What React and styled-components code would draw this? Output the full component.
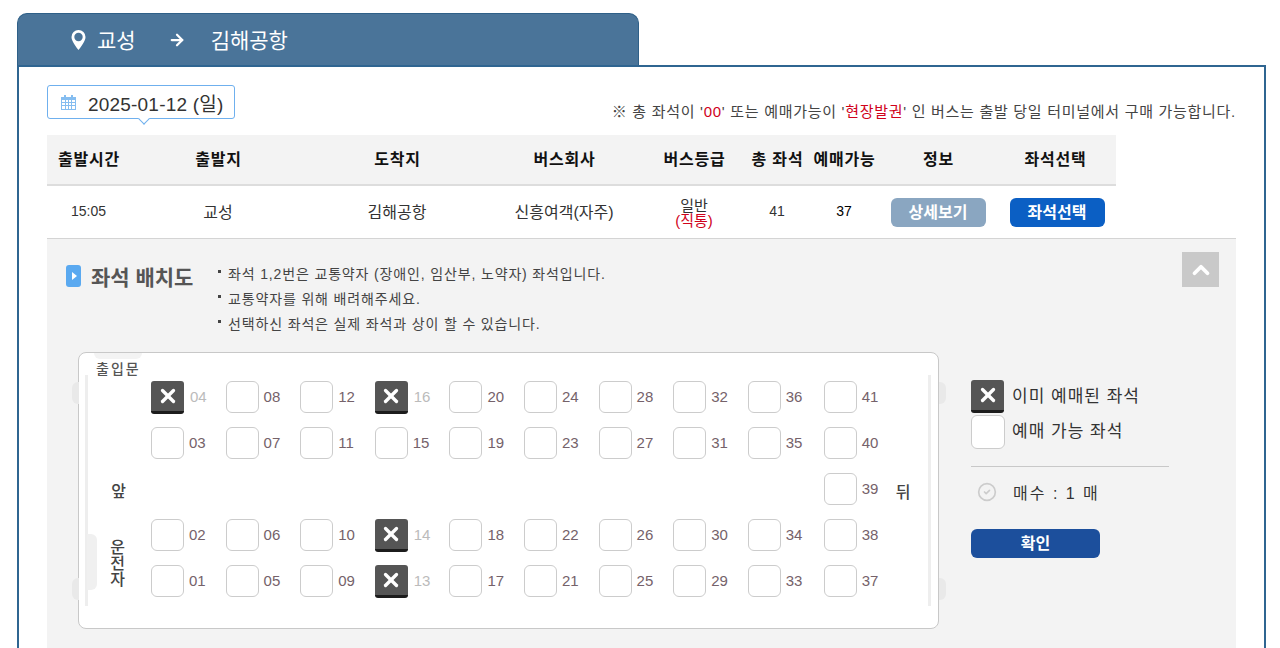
import styled, { createGlobalStyle } from "styled-components";
import { ArrowRight, ChevronUp, CircleCheck, X } from "lucide-react";

const GlobalStyle = createGlobalStyle`
  html, body {
    margin: 0;
    height: 648px;
    overflow: hidden;
    background: #fff;
  }
  body {
    font-family: "Liberation Sans", "Noto Sans CJK KR", sans-serif;
    color: #222;
  }
`;

const Page = styled.div`
  padding: 13px 14px 0 17px;
`;

const RouteTab = styled.div`
  width: 622px;
  height: 52px;
  box-sizing: border-box;
  display: flex;
  align-items: center;
  padding-left: 53px;
  background: #4a7499;
  border: 1px solid #2f6088;
  border-bottom: 0;
  border-radius: 10px 10px 0 0;
  color: #fff;
  font-size: 21px;
`;

const Place = styled.span`
  margin-bottom: 2px;
  margin-left: ${(p) => p.$left || 0}px;
`;

const Arrow = styled.span`
  display: flex;
  margin: 0 25px 0 32px;
`;

const Box = styled.div`
  box-sizing: border-box;
  width: 1249px;
  height: 640px;
  padding: 18px 28px 0 28px;
  border: 2px solid #2f6591;
  border-bottom: 0;
`;

const TopRow = styled.div`
  height: 50px;
  display: flex;
  justify-content: space-between;
`;

const DateBadge = styled.div`
  position: relative;
  box-sizing: border-box;
  width: 188px;
  height: 34px;
  display: flex;
  align-items: center;
  gap: 12px;
  padding-left: 13px;
  background: #fff;
  border: 1px solid #6fb0ee;
  border-radius: 3px;
  font-size: 19px;
  letter-spacing: 0.2px;
  color: #333;
  &::after {
    content: "";
    position: absolute;
    left: 92px;
    bottom: -5px;
    width: 7px;
    height: 7px;
    background: #fff;
    border-right: 1px solid #6fb0ee;
    border-bottom: 1px solid #6fb0ee;
    transform: rotate(45deg);
  }
`;

const Notice = styled.div`
  align-self: flex-start;
  margin-top: 17px;
  font-size: 15px;
  line-height: 20px;
  letter-spacing: 0.71px;
  color: #444;
  white-space: nowrap;
`;

const Red = styled.span`
  color: #d0021b;
`;

const Columns = styled.div`
  width: 1069px;
  display: grid;
  grid-template-columns: 83px 176px 182px 152px 108px 58px 76px 112px 122px;
  align-items: center;
  text-align: center;
`;

const HeadRow = styled(Columns)`
  box-sizing: content-box;
  height: 46px;
  padding-bottom: 3px;
  background: #f3f3f3;
  border-bottom: 2px solid #ddd;
  font-size: 16px;
  letter-spacing: 0.8px;
  text-indent: 1px;
  font-weight: 700;
  color: #111;
  white-space: nowrap;
`;

const BodyRow = styled(Columns)`
  height: 52px;
  font-size: 16px;
  color: #333;
`;

const Plain = styled.div`
  padding-bottom: 2px;
`;

const Time = styled(Plain)`
  font-size: 14px;
`;

const Grade = styled.div`
  line-height: 15px;
  padding-top: 1px;
  font-size: 15px;
`;

const Count = styled.div`
  font-size: 14px;
  padding-bottom: 2px;
  color: ${(p) => (p.$strong ? "#000" : "#333")};
`;

const RowButton = styled.div`
  justify-self: center;
  width: 95px;
  height: 29px;
  margin-left: ${(p) => p.$shift || 0}px;
  line-height: 29px;
  border-radius: 6px;
  background: ${(p) => p.$bg};
  color: #fff;
  font-size: 16px;
  font-weight: 700;
`;

const Panel = styled.div`
  position: relative;
  height: 420px;
  box-sizing: border-box;
  padding: 19px 0 0 19px;
  background: #f3f3f3;
  border-top: 1px solid #d4d4d4;
`;

const CollapseButton = styled.div`
  position: absolute;
  top: 13px;
  right: 17px;
  width: 37px;
  height: 35px;
  display: flex;
  align-items: center;
  justify-content: center;
  background: #c9c9c9;
`;

const PanelHead = styled.div`
  display: flex;
  height: 94px;
`;

const TitleMark = styled.div`
  width: 15px;
  height: 22px;
  margin: 7px 10px 0 0;
  display: flex;
  align-items: center;
  justify-content: center;
  background: #5aa9f0;
  border-radius: 3px;
  &::before {
    content: "";
    border-left: 5px solid #fff;
    border-top: 4px solid transparent;
    border-bottom: 4px solid transparent;
    margin-left: 1px;
  }
`;

const Title = styled.div`
  width: 127px;
  margin-top: 5px;
  font-size: 21px;
  line-height: 29px;
  font-weight: 700;
  color: #555;
`;

const Notes = styled.ul`
  list-style: none;
  margin: 4px 0 0;
  padding: 0;
  font-size: 14px;
  line-height: 25px;
  letter-spacing: 0.85px;
  color: #444;
`;

const Note = styled.li`
  position: relative;
  padding-left: 10px;
  &::before {
    content: "";
    position: absolute;
    left: 0;
    top: 8px;
    width: 3px;
    height: 3px;
    background: #444;
  }
`;

const PanelBody = styled.div`
  display: flex;
  gap: 32px;
  padding-left: 12px;
`;

const Card = styled.div`
  position: relative;
  box-sizing: border-box;
  width: 861px;
  height: 277px;
  padding-top: 28px;
  background: #fff;
  border: 1px solid #c8c8c8;
  border-radius: 8px;
`;

const Blob = styled.div`
  position: absolute;
  width: 7px;
  height: 22px;
  background: #e9e9e9;
  top: ${(p) => p.$top}px;
  ${(p) =>
    p.$side === "left"
      ? "left: -7px; border-radius: 6px 0 0 6px;"
      : "right: -8px; border-radius: 0 6px 6px 0;"}
`;

const Door = styled.div`
  position: absolute;
  top: 0;
  left: 15px;
  width: 48px;
  height: 6px;
  background: #f3f3f3;
  border-radius: 0 0 8px 8px;
`;

const DoorLabel = styled.div`
  position: absolute;
  top: 6px;
  left: 17px;
  font-size: 14px;
  line-height: 20px;
  font-weight: 500;
  color: #555;
  letter-spacing: 2px;
`;

const Rail = styled.div`
  position: absolute;
  top: 22px;
  ${(p) => (p.$side === "left" ? "left: 6px;" : "right: 7px;")}
  width: 3px;
  height: 231px;
  background: #eee;
`;

const DriverSeat = styled.div`
  position: absolute;
  top: 181px;
  left: 8px;
  width: 10px;
  height: 56px;
  background: #f0f0f0;
  border-radius: 0 6px 6px 0;
`;

const SeatGrid = styled.div`
  display: grid;
  grid-template-columns: 72px repeat(8, 74.6px) 76px 71px 1fr;
  grid-auto-rows: 46px;
`;

const SideLabel = styled.div`
  grid-column: ${(p) => p.$col};
  grid-row: ${(p) => p.$row};
  padding: ${(p) => p.$pad};
  font-size: 16px;
  line-height: 16px;
  color: #444;
  font-weight: 500;
  text-align: ${(p) => p.$align || "center"};
`;

const SeatCell = styled.div`
  grid-column: ${(p) => p.$col};
  grid-row: ${(p) => p.$row};
  display: flex;
  align-items: flex-start;
  gap: ${(p) => (p.$taken ? 6 : 5)}px;
  color: ${(p) => (p.$taken ? "#bbb" : "#75626a")};
  font-size: 15px;
  line-height: 32px;
`;

const FreeSeat = styled.div`
  box-sizing: border-box;
  flex: none;
  width: ${(p) => p.$size || 33}px;
  height: ${(p) => p.$size || 32}px;
  background: #fff;
  border: 1.5px solid #ccc;
  border-radius: 6px;
`;

const TakenSeat = styled.div`
  box-sizing: border-box;
  flex: none;
  width: 33px;
  height: 33px;
  display: flex;
  align-items: center;
  justify-content: center;
  background: #555;
  border-bottom: 3px solid #1c1c1c;
  border-radius: 3px;
`;

const Side = styled.div`
  width: 198px;
  padding-top: 27px;
`;

const LegendRow = styled.div`
  height: 35px;
  display: flex;
  align-items: center;
  gap: ${(p) => p.$gap}px;
  font-size: 17px;
  letter-spacing: 1px;
  color: #333;
`;

const LegendText = styled.span`
  margin-top: -4px;
`;

const Divider = styled.div`
  height: 1px;
  margin-top: 17px;
  background: #c8c8c8;
`;

const Tickets = styled.div`
  display: flex;
  align-items: center;
  gap: 16px;
  height: 50px;
  padding-left: 6px;
  font-size: 16px;
  letter-spacing: 2px;
  color: #333;
`;

const ConfirmButton = styled.div`
  width: 129px;
  height: 29px;
  margin-top: 12px;
  line-height: 29px;
  text-align: center;
  background: #1c4f9c;
  border-radius: 6px;
  color: #fff;
  font-size: 16px;
  font-weight: 700;
`;

const PinIcon = () => (
  <svg width="15" height="20" viewBox="0 0 15 20">
    <path
      fill="#fff"
      fillRule="evenodd"
      d="M7.5 0a7 7 0 0 1 7 7c0 4.200-4.500 9.800-7 13-2.500-3.200-7-8.800-7-13a7 7 0 0 1 7-7zm0 2.800a4.200 4.200 0 1 0 0 8.400 4.200 4.200 0 0 0 0-8.400z"
    />
  </svg>
);

const CalendarIcon = () => (
  <svg width="15" height="15" viewBox="0 0 15 15">
    <path
      fill="#85bdf0"
      fillRule="evenodd"
      d="M3 0h2v2h5V0h2v2h3v13H0V2h3zM1 5v2h3V5zm4 0v2h2V5zm3 0v2h2V5zm3 0v2h3V5zM1 8v2h3V8zm4 0v2h2V8zm3 0v2h2V8zm3 0v2h3V8zM1 11v3h3v-3zm4 0v3h2v-3zm3 0v3h2v-3zm3 0v3h3v-3z"
    />
  </svg>
);

// grid row of each seat line, row 3 only holds seat 39
const seatRows = [
  { row: 1, seats: ["04", "08", "12", "16", "20", "24", "28", "32", "36", "41"], taken: ["04", "16"] },
  { row: 2, seats: ["03", "07", "11", "15", "19", "23", "27", "31", "35", "40"], taken: [] },
  { row: 4, seats: ["02", "06", "10", "14", "18", "22", "26", "30", "34", "38"], taken: ["14"] },
  { row: 5, seats: ["01", "05", "09", "13", "17", "21", "25", "29", "33", "37"], taken: ["13"] },
];

const Seat = ({ number, col, row, taken }) => (
  <SeatCell $col={col} $row={row} $taken={taken}>
    {taken ? (
      <TakenSeat>
        <X size={22} color="#fff" strokeWidth={3.6} />
      </TakenSeat>
    ) : (
      <FreeSeat />
    )}
    {number}
  </SeatCell>
);

const App = () => {
  return (
    <Page>
      <GlobalStyle />
      <RouteTab>
        <PinIcon />
        <Place $left={11}>교성</Place>
        <Arrow>
          <ArrowRight size={18} color="#fff" strokeWidth={3} />
        </Arrow>
        <Place>김해공항</Place>
      </RouteTab>
      <Box>
        <TopRow>
          <DateBadge>
            <CalendarIcon />
            2025-01-12 (일)
          </DateBadge>
          <Notice>
            ※ 총 좌석이 '<Red>00</Red>' 또는 예매가능이 '<Red>현장발권</Red>' 인 버스는 출발 당일 터미널에서 구매 가능합니다.
          </Notice>
        </TopRow>
        <HeadRow>
          <div>출발시간</div>
          <div>출발지</div>
          <div>도착지</div>
          <div>버스회사</div>
          <div>버스등급</div>
          <div>총 좌석</div>
          <div>예매가능</div>
          <div>정보</div>
          <div>좌석선택</div>
        </HeadRow>
        <BodyRow>
          <Time>15:05</Time>
          <Plain>교성</Plain>
          <Plain>김해공항</Plain>
          <Plain>신흥여객(자주)</Plain>
          <Grade>
            일반
            <br />
            <Red>(직통)</Red>
          </Grade>
          <Count>41</Count>
          <Count $strong>37</Count>
          <RowButton $bg="#8aa6c1">상세보기</RowButton>
          <RowButton $bg="#0b5fc4" $shift={4}>좌석선택</RowButton>
        </BodyRow>
        <Panel>
          <CollapseButton>
            <ChevronUp size={26} color="#fff" strokeWidth={3.5} />
          </CollapseButton>
          <PanelHead>
            <TitleMark />
            <Title>좌석 배치도</Title>
            <Notes>
              <Note>좌석 1,2번은 교통약자 (장애인, 임산부, 노약자) 좌석입니다.</Note>
              <Note>교통약자를 위해 배려해주세요.</Note>
              <Note>선택하신 좌석은 실제 좌석과 상이 할 수 있습니다.</Note>
            </Notes>
          </PanelHead>
          <PanelBody>
            <Card>
              <Blob $side="left" $top={29} />
              <Blob $side="left" $top={225} />
              <Blob $side="right" $top={29} />
              <Blob $side="right" $top={225} />
              <Door />
              <DoorLabel>출입문</DoorLabel>
              <Rail $side="left" />
              <Rail $side="right" />
              <DriverSeat />
              <SeatGrid>
                <SideLabel $col={1} $row={3} $pad="11px 0 0 7px">앞</SideLabel>
                <SideLabel $col={1} $row="4 / 6" $pad="21px 0 0 5px">
                  운<br />전<br />자
                </SideLabel>
                {seatRows.map((r) =>
                  r.seats.map((n, i) => (
                    <Seat key={n} number={n} col={i + 2} row={r.row} taken={r.taken.includes(n)} />
                  ))
                )}
                <Seat number="39" col={11} row={3} />
                <SideLabel $col={12} $row={3} $pad="12px 0 0 1px" $align="left">뒤</SideLabel>
              </SeatGrid>
            </Card>
            <Side>
              <LegendRow $gap={8}>
                <TakenSeat>
                  <X size={22} color="#fff" strokeWidth={3.6} />
                </TakenSeat>
                <LegendText>이미 예매된 좌석</LegendText>
              </LegendRow>
              <LegendRow $gap={7}>
                <FreeSeat $size={34} />
                <LegendText>예매 가능 좌석</LegendText>
              </LegendRow>
              <Divider />
              <Tickets>
                <CircleCheck size={20} color="#ccc" strokeWidth={2} />
                매수 : 1 매
              </Tickets>
              <ConfirmButton>확인</ConfirmButton>
            </Side>
          </PanelBody>
        </Panel>
      </Box>
    </Page>
  );
};

export default App;
